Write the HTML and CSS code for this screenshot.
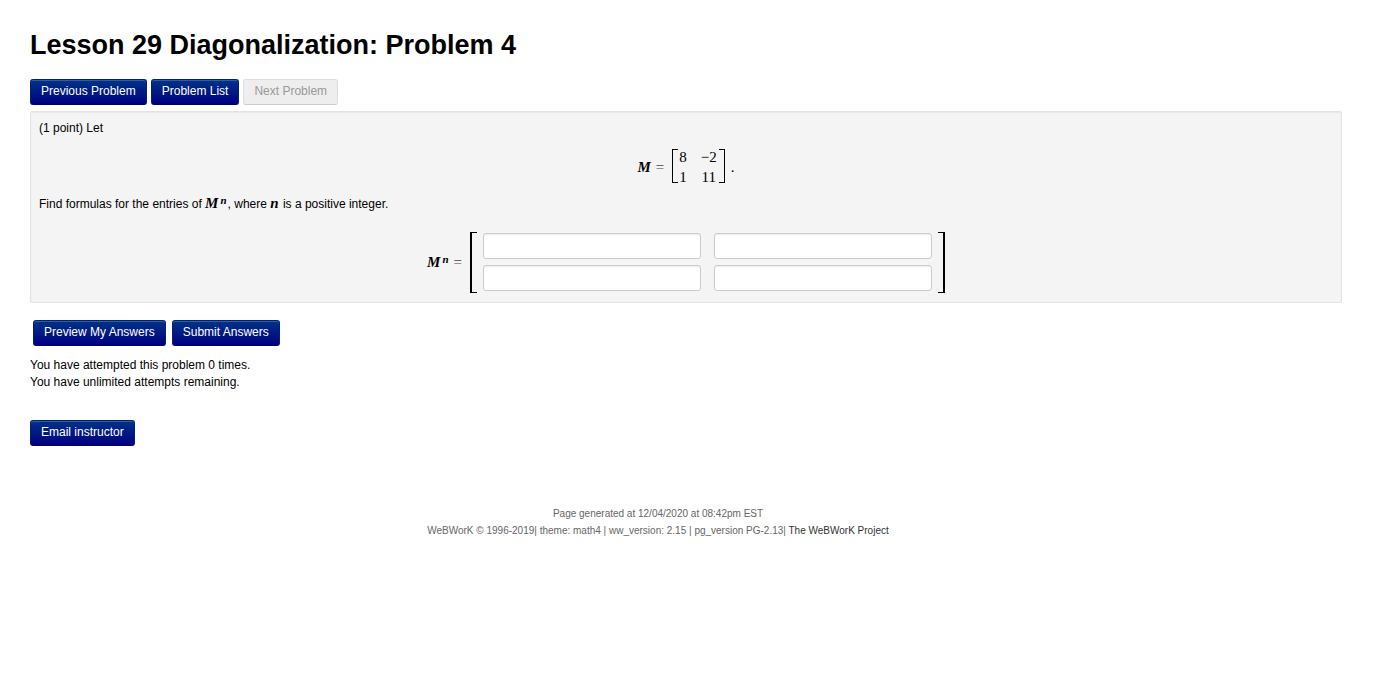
FILE: index.html
```
<!DOCTYPE html>
<html lang="en">
<head>
  <meta charset="UTF-8" />
  <meta name="viewport" content="width=device-width, initial-scale=1.0"/>
  <title>Lesson 29 Diagonalization: Problem 4</title>
  <link rel="stylesheet" href="styles.css">
</head>
<body>

<main>
  <h1>Lesson 29 Diagonalization: Problem 4</h1>

  <nav class="problem-nav">
    <button type="button" class="btn">Previous Problem</button>
    <button type="button" class="btn">Problem List</button>
    <button type="button" class="btn" disabled>Next Problem</button>
  </nav>

  <form id="problemForm">
    <div class="problem">
      <p>(1 point) Let</p>

      <div class="equation given">
        <i>M</i><span class="eq">=</span>
        <div class="matrix">
          <span>8</span><span>−2</span>
          <span>1</span><span>11</span>
        </div>
        <span class="period">.</span>
      </div>

      <p>Find formulas for the entries of <span class="math"><i>M</i><sup>n</sup></span>, where <span class="math"><i>n</i></span> is a positive integer.</p>

      <div class="equation answer">
        <span><i>M</i><sup>n</sup></span><span class="eq">=</span>
        <div class="matrix answers">
          <input type="text" id="ans1" aria-label="row 1 column 1" />
          <input type="text" id="ans2" aria-label="row 1 column 2" />
          <input type="text" id="ans3" aria-label="row 2 column 1" />
          <input type="text" id="ans4" aria-label="row 2 column 2" />
        </div>
      </div>
    </div>

    <div class="submit-buttons">
      <button type="button" class="btn">Preview My Answers</button>
      <button type="button" class="btn">Submit Answers</button>
    </div>
  </form>

  <p>You have attempted this problem 0 times.<br>You have unlimited attempts remaining.</p>

  <button type="button" class="btn email">Email instructor</button>
</main>

<footer>
  <div>Page generated at 12/04/2020 at 08:42pm EST</div>
  <div>WeBWorK © 1996-2019| theme: math4 | ww_version: 2.15 | pg_version PG-2.13| <a href="#">The WeBWorK Project</a></div>
</footer>

</body>
</html>
```
FILE: styles.css
```
* {
  box-sizing: border-box;
}
body {
  margin: 0;
  padding: 28px 57px 20px 30px;
  background: white;
  color: black;
  font-family: "Liberation Sans", Arial, sans-serif;
  font-size: 12px;
  line-height: 17px;
}
h1 {
  margin: 0 0 16px;
  font-size: 27px;
  line-height: 35px;
}
p {
  margin: 0;
}
.problem-nav {
  display: flex;
  gap: 4px;
  margin-bottom: 6px;
}
.btn {
  height: 26px;
  padding: 0 10px 2px;
  border: 1px solid #002266;
  border-color: #00246b #00246b #000070;
  border-radius: 3px;
  background: linear-gradient(#003388, #000080);
  box-shadow: inset 0 1px 0 rgba(255,255,255,0.2);
  color: white;
  font-family: inherit;
  font-size: 12px;
  line-height: 17px;
  cursor: pointer;
}
.btn:disabled {
  border-color: #dddddd #dddddd #cccccc;
  background: #eeeeee;
  box-shadow: none;
  color: #999999;
  cursor: default;
}
.problem {
  padding: 8px 8px 9px;
  border: 1px solid #e3e3e3;
  border-radius: 2px;
  background: #f4f4f4;
  box-shadow: inset 0 1px 1px rgba(0,0,0,0.05);
}

/* math */
.math, .equation {
  font-family: "Liberation Serif", "Times New Roman", serif;
  font-size: 15px;
  line-height: 17px;
}
.math {
  margin-right: 1px;
}
sup {
  margin-left: 2px;
  font-size: 11px;
  font-style: italic;
  font-weight: bold;
  line-height: 0;
  vertical-align: 4px;
}
.math i, .equation i {
  font-weight: bold;
}
.equation {
  display: flex;
  justify-content: center;
  align-items: center;
}
.eq {
  margin: 0 8px 0 5px;
  color: #444444;
}
.given {
  margin: 12px 0 10px;
}
.answer {
  margin-top: 19px;
}
.matrix {
  position: relative;
  display: grid;
  grid-template-columns: auto auto;
  gap: 4px 14px;
  padding: 0 8px 0 7px;
  line-height: 16px;
  text-align: center;
}
.matrix::before, .matrix::after {
  content: "";
  position: absolute;
  top: 0;
  bottom: 0;
  width: 5px;
  border: 1px solid black;
}
.matrix::before {
  left: 0;
  border-right: none;
}
.matrix::after {
  right: 0;
  border-left: none;
}
.given .matrix::before, .given .matrix::after {
  bottom: 2px;
}
.period {
  margin-left: 6px;
}
.answers {
  gap: 6px 13px;
  padding: 1px 13px 2px;
}
.answers::before, .answers::after {
  border-width: 1px 2px;
}
.answers input {
  width: 218px;
  height: 26px;
  padding: 4px 6px;
  border: 1px solid #cccccc;
  border-radius: 3px;
  background: white;
  box-shadow: inset 0 1px 1px rgba(0,0,0,0.075);
  font-size: 12px;
}

.submit-buttons {
  display: flex;
  gap: 6px;
  margin: 17px 3px 11px;
}
.email {
  margin-top: 29px;
}
footer {
  margin: 59px 56px 0 0;
  color: #666666;
  font-size: 10px;
  text-align: center;
}
footer a {
  color: #333333;
  text-decoration: none;
}
```
